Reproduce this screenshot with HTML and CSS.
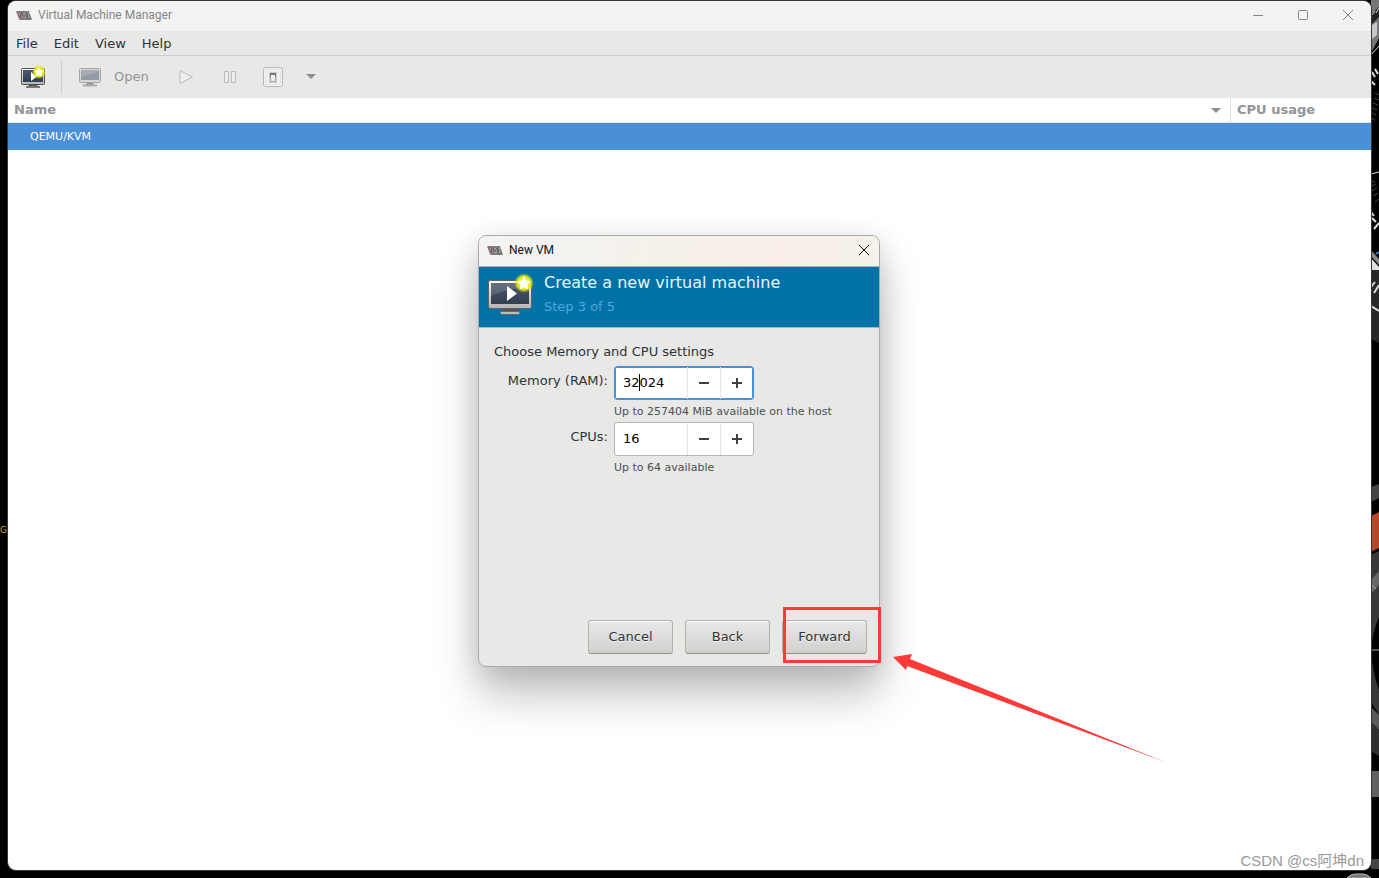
FILE: index.html
```html
<!DOCTYPE html>
<html lang="en">
<head>
    <meta charset="UTF-8">
    <meta name="viewport" content="width=device-width, initial-scale=1.0">
    <title>Virtual Machine Manager</title>
    <link rel="stylesheet" href="styles.css">
</head>
<body>
    <!-- Shared icons -->
    <svg class="defs" aria-hidden="true">
        <defs>
            <linearGradient id="screen" x1="0" y1="0" x2="0" y2="1">
                <stop offset="0" stop-color="#4c5769"/>
                <stop offset="1" stop-color="#323e52"/>
            </linearGradient>
            <linearGradient id="frame" x1="0" y1="0" x2="0" y2="1">
                <stop offset="0" stop-color="#fafafa"/>
                <stop offset="1" stop-color="#b4b4b4"/>
            </linearGradient>
            <radialGradient id="glow">
                <stop offset="0" stop-color="#ffff50"/>
                <stop offset="0.65" stop-color="#e4ea18"/>
                <stop offset="1" stop-color="#d8e000" stop-opacity="0"/>
            </radialGradient>
            <symbol id="logo" viewBox="0 0 16 9">
                <path d="M0 0h13l3 9H3z" fill="#a5a1a3"/>
                <path d="M1 1l3 6 1-6" fill="none" stroke="#8c4856" stroke-width="1"/>
                <path d="M6 8V2l2 4 2-4 1 6M11 2l1 6M13 3l2 5" fill="none" stroke="#555" stroke-width="0.8"/>
                <path d="M4 8h11M1 1h12" stroke="#5c5a5b" stroke-width="1"/>
            </symbol>
            <symbol id="new-vm" viewBox="0 0 48 44">
                <path d="M17 35h14l1 4H16z" fill="#555"/>
                <rect x="14.500" y="38.500" width="19" height="3" rx="1" fill="#bbb" stroke="#666"/>
                <rect x="2.500" y="7.500" width="43" height="28" rx="2" fill="url(#frame)" stroke="#66625f"/>
                <rect x="5" y="10" width="38" height="21" fill="url(#screen)"/>
                <path d="M5 10h38v4C30 15 15 18 5 23z" fill="#fff" opacity="0.15"/>
                <path d="M21 13v15l10-7.500z" fill="#fff"/>
                <circle cx="38" cy="10" r="10" fill="url(#glow)"/>
                <path d="M38 3l2.200 4.500 4.800.7-3.500 3.500.9 4.800-4.400-2.300-4.400 2.300.9-4.800-3.500-3.500 4.800-.7z" fill="#fff"/>
            </symbol>
            <symbol id="new-vm-small" viewBox="0 0 26 24">
                <path d="M9 19h8l1 3H8z" fill="#555"/>
                <path d="M6 22h14" stroke="#777" stroke-width="2"/>
                <rect x="1.500" y="3.500" width="23" height="16" rx="1" fill="url(#frame)" stroke="#55524f"/>
                <rect x="3" y="5" width="20" height="12" fill="url(#screen)"/>
                <path d="M11 7v9l6-4.500z" fill="#fff"/>
                <circle cx="19" cy="7" r="7" fill="url(#glow)"/>
                <path d="M19 2l1.500 3.200 3.500.4-2.500 2.400.7 3.500-3.200-1.800-3.200 1.800.7-3.500L14 5.600l3.500-.4z" fill="#fff"/>
            </symbol>
        </defs>
    </svg>

    <!-- Wallpaper behind the window -->
    <span class="desktop-label">GI</span>
    <svg class="wallpaper" viewBox="0 0 8 878" aria-hidden="true">
        <path d="M0 0h8v38L0 53z" fill="#77777a"/>
        <path d="M0 14l8-7v10l-8 8z" fill="#222"/>
        <path d="M1 25l5-3v13l-5 4z" fill="#c8c8cc"/>
        <path d="M1 15l3-4M5 13l3-5M0 55l8-9" stroke="#ddd" stroke-width="1"/>
        <path d="M1 72l3 5M4 69l3 5M0 81l4 4" stroke="#ddd" stroke-width="2"/>
        <path d="M4 93l4 2M3 98l5 2M2 103l5 2M1 108l5 2M1 113l4 2M0 118l4 2M0 181l4 1M0 186l5-2M1 191l5-3M2 196l5-3M4 202l4-3" stroke="#444"/>
        <path d="M0 174l8-2" stroke="#ddd" stroke-width="1"/>
        <path d="M0 212l3 4M1 218l4 4M3 229l5-6" stroke="#ddd" stroke-width="2"/>
        <path d="M0 269h8v74L0 339z" fill="#272727"/>
        <path d="M0 250l8 9v6l-8-9z" fill="#888"/>
        <path d="M0 258l8 9v3H0z" fill="#e0e0e0"/>
        <path d="M5 254l3-2" stroke="#4585c0" stroke-width="2"/>
        <path d="M0 287l4-5M3 293l5-8M0 306l8 5" stroke="#ddd" stroke-width="2"/>
        <path d="M0 487l8-3v14l-8 4z" fill="#444"/>
        <path d="M0 516l8-4v36l-8 4z" fill="#b5482a"/>
        <path d="M0 555l8-4v51L0 620z" fill="#383838"/>
        <path d="M0 580l8-9v14l-8 9z" fill="#666"/>
        <path d="M0 584l5 5M0 650h8" stroke="#aaa" stroke-width="1"/>
        <path d="M0 620C3 608 5 600 8 595v22Q3 628 0 646zM0 652q2 22 8 38v25L0 702z" fill="#383838"/>
        <path d="M0 707l8 8v15l-8-8z" fill="#5b5b5b"/>
        <path d="M0 722l8 8v26l-8-5z" fill="#303030"/>
        <path d="M0 771h8v26H0z" fill="#606060"/>
        <path d="M0 859h8v10H0z" fill="#444"/>
    </svg>
    <svg class="desktop-knob" viewBox="0 0 32 5" aria-hidden="true">
        <path d="M0 5q4-4 8-4h8q4 0 8 4z" fill="#777" stroke="#bbb"/>
    </svg>

    <main class="window">
        <header class="titlebar">
            <svg class="logo"><use href="#logo"/></svg>
            <h1>Virtual Machine Manager</h1>
            <div class="window-buttons">
                <button aria-label="Minimize"><svg viewBox="0 0 12 12"><path d="M1 6.500h10"/></svg></button>
                <button aria-label="Maximize"><svg viewBox="0 0 12 12"><rect x="1.500" y="1.500" width="9" height="9" rx="1"/></svg></button>
                <button aria-label="Close"><svg viewBox="0 0 12 12"><path d="M1 1l10 10M11 1L1 11"/></svg></button>
            </div>
        </header>

        <nav class="menubar">
            <button>File</button>
            <button>Edit</button>
            <button>View</button>
            <button>Help</button>
        </nav>

        <div class="toolbar">
            <button class="new" aria-label="New virtual machine"><svg width="26" height="24"><use href="#new-vm-small"/></svg></button>
            <button class="open" disabled>
                <svg width="24" height="20" viewBox="0 0 24 20">
                    <path d="M9 15h6l1 3H8z" fill="#999"/>
                    <rect x="1.500" y="1.500" width="21" height="14" rx="1" fill="#d8d8d6" stroke="#a5a5a3"/>
                    <path d="M3 3h18v10H3z" fill="#929aa5"/>
                    <path d="M3 3h18v2L3 10z" fill="#a5abb4"/>
                    <path d="M5 18.500h14" stroke="#aaa" stroke-width="2"/>
                </svg>
                Open
            </button>
            <button class="play" disabled aria-label="Run">
                <svg width="16" height="16" viewBox="0 0 16 16"><path d="M2 1.500v13L14.500 8z" fill="#eeeeec" stroke="#bbb"/></svg>
            </button>
            <button class="pause" disabled aria-label="Pause">
                <svg width="14" height="14" viewBox="0 0 14 14"><path d="M1.500 1.500h4v11h-4zM8.500 1.500h4v11h-4z" fill="#eeeeec" stroke="#bbb"/></svg>
            </button>
            <button class="power" disabled aria-label="Shut down">
                <svg width="20" height="20" viewBox="0 0 20 20">
                    <rect x="0.500" y="0.500" width="19" height="19" rx="2" fill="#f4f4f3" stroke="#b8b8b6"/>
                    <rect x="2.500" y="2.500" width="15" height="15" rx="1" fill="#f0f0ef" stroke="#e2e2e0"/>
                    <path d="M6.500 5.500h7v10h-7z" fill="#aaa" stroke="#ccc"/>
                    <path d="M7 6h6v4H7z" fill="#777"/>
                    <path d="M8 8h4v6H8z" fill="#eee"/>
                </svg>
            </button>
            <button class="more" disabled aria-label="Shut down options">
                <svg width="10" height="5" viewBox="0 0 10 5"><path d="M0 0h10L5 5z" fill="#8b8e8f"/></svg>
            </button>
        </div>

        <table class="vm-list">
            <thead>
                <tr>
                    <th class="name">
                        <div>Name <svg width="10" height="5" viewBox="0 0 10 5"><path d="M0 0h10L5 5z" fill="#8b8e8f"/></svg></div>
                    </th>
                    <th class="cpu">CPU usage</th>
                </tr>
            </thead>
            <tbody>
                <tr class="selected">
                    <td>QEMU/KVM</td>
                    <td></td>
                </tr>
            </tbody>
        </table>

        <!-- New VM wizard -->
        <section class="dialog" role="dialog" aria-labelledby="dialog_title">
            <header class="dialog-titlebar">
                <svg class="logo"><use href="#logo"/></svg>
                <h2 id="dialog_title">New VM</h2>
                <button aria-label="Close dialog"><svg viewBox="0 0 12 12"><path d="M1 1l10 10M11 1L1 11"/></svg></button>
            </header>
            <div class="banner">
                <svg width="48" height="44"><use href="#new-vm"/></svg>
                <div>
                    <h3>Create a new virtual machine</h3>
                    <p>Step 3 of 5</p>
                </div>
            </div>
            <form class="settings">
                <p>Choose Memory and CPU settings</p>
                <div class="fields">
                    <label for="memory">Memory (RAM):</label>
                    <div class="spin focused">
                        <input type="text" id="memory" value="32024">
                        <span class="caret"></span>
                        <button type="button" aria-label="Less memory"><svg viewBox="0 0 10 10"><path d="M0 5h10"/></svg></button>
                        <button type="button" aria-label="More memory"><svg viewBox="0 0 10 10"><path d="M0 5h10M5 0v10"/></svg></button>
                    </div>
                    <small>Up to 257404 MiB available on the host</small>
                    <label for="cpus">CPUs:</label>
                    <div class="spin">
                        <input type="text" id="cpus" value="16">
                        <button type="button" aria-label="Fewer CPUs"><svg viewBox="0 0 10 10"><path d="M0 5h10"/></svg></button>
                        <button type="button" aria-label="More CPUs"><svg viewBox="0 0 10 10"><path d="M0 5h10M5 0v10"/></svg></button>
                    </div>
                    <small>Up to 64 available</small>
                </div>
                <div class="actions">
                    <button type="button">Cancel</button>
                    <button type="button">Back</button>
                    <div class="marked">
                        <button type="button">Forward</button>
                        <span class="mark"></span>
                        <svg class="arrow" width="272" height="108" viewBox="0 0 272 108" aria-hidden="true">
                            <path d="M0 3l19-3-2 5L272 108 14 12l-1 4z" fill="#fc3a38"/>
                        </svg>
                    </div>
                </div>
            </form>
        </section>
    </main>

    <span class="watermark">CSDN @cs阿坤dn</span>
</body>
</html>
```
FILE: styles.css
```css
* {
    box-sizing: border-box;
}

body {
    position: relative;
    margin: 0;
    padding: 1px 8px 8px;
    height: 100vh;
    display: flex;
    overflow: hidden;
    background-color: #000;
    font-family: "DejaVu Sans", sans-serif;
    font-size: 13px;
    color: #2e3436;
}

h1, h2, h3, p {
    margin: 0;
    font-weight: normal;
}

button {
    padding: 0;
    border: none;
    background: none;
    font: inherit;
    color: inherit;
}

svg {
    display: block;
    flex: none;
}

.defs {
    position: absolute;
    width: 0;
    height: 0;
}

/* desktop */
.wallpaper {
    position: absolute;
    top: 0;
    right: 0;
    width: 8px;
    height: 878px;
}

.desktop-knob {
    position: absolute;
    right: 0;
    bottom: 0;
    width: 32px;
    height: 5px;
}

.desktop-label {
    position: absolute;
    top: 524px;
    left: 0;
    font-size: 9px;
    line-height: 12px;
    color: #d0a818;
}

/* main window */
.window {
    position: relative;
    flex: 1;
    display: flex;
    flex-direction: column;
    border-radius: 8px;
    background-color: #fff;
    box-shadow: 0 0 0 1px #3a3538;
}

.titlebar {
    display: flex;
    align-items: center;
    height: 30px;
    padding: 0 17px 2px 8px;
    border-radius: 8px 8px 0 0;
    background-color: #f3f3f3;
    color: #858585;
}

.logo {
    width: 16px;
    height: 9px;
}

.titlebar h1,
.dialog-titlebar h2 {
    flex: 1;
    margin-left: 6px;
    font-family: Roboto, sans-serif;
    font-size: 12px;
}

.window-buttons {
    display: flex;
    gap: 33px;
}

.window-buttons svg,
.dialog-titlebar button svg {
    width: 12px;
    height: 12px;
    fill: none;
    stroke: currentColor;
}

.menubar {
    display: flex;
    gap: 16px;
    height: 25px;
    padding: 0 8px;
    background-color: #e8e8e6;
    border-bottom: 1px solid #cfcfcd;
}

.toolbar {
    display: flex;
    align-items: center;
    height: 42px;
    padding-bottom: 1px;
    background-color: #e8e8e6;
    color: #929595;
}

.toolbar .new {
    padding: 5px 15px 5px 12px;
    border-right: 1px solid #cfcfcd;
}

.toolbar .open {
    display: flex;
    align-items: center;
    gap: 12px;
    margin: 0 29px 0 16px;
}

.toolbar .pause {
    margin: 0 26px 0 29px;
}

.toolbar .more {
    margin-left: 23px;
}

.vm-list {
    width: 100%;
    table-layout: fixed;
    border-collapse: separate;
    border-spacing: 0;
    text-align: left;
}

.vm-list th {
    height: 25px;
    padding: 0 6px;
    border-bottom: 1px solid #e4e4e2;
    line-height: 22px;
    color: #929595;
}

.vm-list .name div {
    display: flex;
    align-items: center;
    justify-content: space-between;
    padding-right: 3px;
}

.vm-list .cpu {
    width: 141px;
    border-left: 1px solid #dededc;
}

.vm-list td {
    height: 27px;
    padding: 0 22px;
    font-size: 11px;
    color: #fff;
}

.vm-list .selected {
    background-color: #4a90d9;
}

/* new vm dialog */
.dialog {
    position: absolute;
    top: 234px;
    left: 470px;
    display: flex;
    flex-direction: column;
    width: 402px;
    min-height: 432px;
    border: 1px solid #a9abab;
    border-radius: 8px;
    background-color: #e8e8e6;
    box-shadow: 0 28px 44px rgba(0, 0, 0, 0.24), 0 4px 28px rgba(0, 0, 0, 0.12);
}

.dialog-titlebar {
    display: flex;
    align-items: center;
    height: 31px;
    padding: 0 9px 2px 8px;
    border-bottom: 1px solid #b3b3b1;
    border-radius: 7px 7px 0 0;
    background: linear-gradient(100deg, #f3f3f2 15%, #f5f1ea 45%, #f9eee9 75%, #f4f2ea);
    color: #111;
}

.banner {
    display: flex;
    gap: 10px;
    height: 61px;
    padding: 6px 8px 0 7px;
    border-bottom: 1px solid #b3b3b1;
    background-color: #0072a8;
    color: #e8f4fa;
}

.banner h3 {
    font-size: 16px;
    line-height: 20px;
}

.banner p {
    margin-top: 6px;
    line-height: 16px;
    color: #4fa8dc;
}

.settings {
    flex: 1;
    display: flex;
    flex-direction: column;
    padding: 15px 12px 12px 15px;
}

.settings p {
    line-height: 17px;
}

.fields {
    display: grid;
    grid-template-columns: 114px 1fr;
    column-gap: 6px;
    margin-top: 6px;
}

.fields label {
    line-height: 30px;
    text-align: right;
}

.fields small {
    grid-column: 2;
    height: 22px;
    font-size: 11px;
    line-height: 24px;
    color: #4c5052;
}

.spin {
    position: relative;
    display: flex;
    width: 140px;
    height: 34px;
    border: 1px solid #b6b6b3;
    border-radius: 3px;
    background-color: #fff;
}

.spin.focused {
    border-color: #4a90d9;
    box-shadow: inset 0 0 0 1px #4a90d9;
}

.spin input {
    width: 72px;
    padding: 0 8px 2px;
    border: none;
    outline: none;
    background: none;
    font: inherit;
    color: #000;
}

.spin .caret {
    position: absolute;
    top: 7px;
    left: 24px;
    width: 1px;
    height: 17px;
    background-color: #000;
}

.spin button {
    display: flex;
    align-items: center;
    justify-content: center;
    width: 33px;
    border-left: 1px solid #e6e6e4;
}

.spin button svg {
    width: 10px;
    height: 10px;
    stroke: #3c4143;
    stroke-width: 2;
}

.actions {
    display: flex;
    justify-content: flex-end;
    gap: 12px;
    margin-top: auto;
}

.actions button {
    width: 85px;
    height: 34px;
    padding-bottom: 2px;
    border: 1px solid #b0b0ad;
    border-bottom-color: #8f8f8c;
    border-radius: 3px;
    background: linear-gradient(#e9e9e8, #d0d0ce);
    box-shadow: inset 0 1px #fafafa;
    text-shadow: 0 1px #f4f4f4;
}

/* callout over the forward button */
.marked {
    position: relative;
}

.mark {
    position: absolute;
    top: -13px;
    right: -14px;
    bottom: -9px;
    left: 1px;
    border: 3px solid #fc3a38;
}

.arrow {
    position: absolute;
    top: 34px;
    left: 111px;
}

.watermark {
    position: absolute;
    right: 15px;
    bottom: 6px;
    font-family: "Liberation Sans", "Noto Sans CJK SC", sans-serif;
    font-size: 15px;
    line-height: 22px;
    color: #999;
}
```
